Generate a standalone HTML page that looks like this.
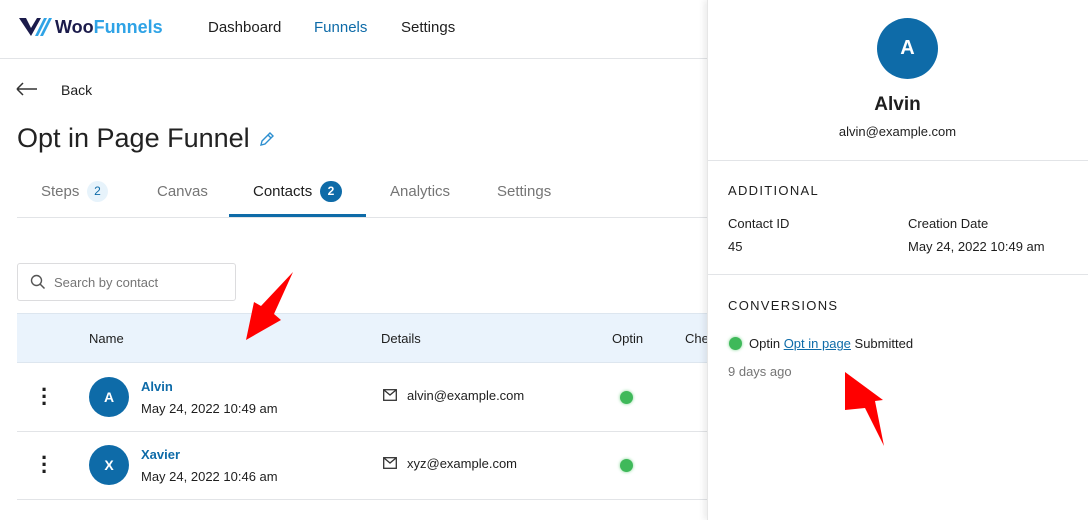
<!DOCTYPE html>
<html><head><style>
*{margin:0;padding:0;box-sizing:border-box}
body{width:1088px;height:520px;overflow:hidden;background:#fff;font-family:"Liberation Sans",sans-serif;color:#1e1e1e;position:relative}
.a{position:absolute;white-space:nowrap}
.av{position:absolute;border-radius:50%;background:#0e6ba8;color:#fff;font-weight:bold;text-align:center}
.dot{position:absolute;width:13px;height:13px;border-radius:50%;background:#3fb95a;box-shadow:0 0 3px #7dd38f}
</style></head><body>
<div class="a" style="left:0;top:58px;width:707px;height:1px;background:#e2e4e7"></div>
<svg class="a" style="left:18px;top:16px" width="34" height="22" viewBox="0 0 34 22"><path d="M1 2h7l5 10 6-10h4L13 20z" fill="#1b1b4b"/><path d="M22 20L31 2h3l-9 18z" fill="#2fa3e6"/><path d="M17 20L26 2h3l-9 18z" fill="#2fa3e6"/></svg>
<div class="a" style="left:55px;top:17px;font-size:18px;font-weight:bold"><span style="color:#1b1b4b">Woo</span><span style="color:#2fa3e6">Funnels</span></div>
<div class="a" style="left:208px;top:19px;font-size:15px">Dashboard</div>
<div class="a" style="left:314px;top:19px;font-size:15px;color:#0e6ba8">Funnels</div>
<div class="a" style="left:401px;top:19px;font-size:15px">Settings</div>
<svg class="a" style="left:16px;top:82px" width="22" height="14"><path d="M1 7h20M1 7l6-6M1 7l6 6" stroke="#333" stroke-width="1.5" fill="none"/></svg>
<div class="a" style="left:61px;top:82px;font-size:14px">Back</div>
<div class="a" style="left:17px;top:123px;font-size:27px;color:#222">Opt in Page Funnel</div>
<svg class="a" style="left:259px;top:131px" width="16" height="16"><path d="M2 14l1-4 8-8 3 3-8 8z M9 4l3 3" stroke="#2d8fd0" stroke-width="1.4" fill="none"/></svg>
<div class="a" style="left:41px;top:183px;font-size:15px;color:#757575">Steps</div>
<div class="a" style="left:87px;top:181px;width:21px;height:21px;border-radius:50%;background:#e7f3fb;color:#0e6ba8;font-size:12px;text-align:center;line-height:21px">2</div>
<div class="a" style="left:157px;top:183px;font-size:15px;color:#757575">Canvas</div>
<div class="a" style="left:253px;top:183px;font-size:15px">Contacts</div>
<div class="a" style="left:320px;top:181px;width:22px;height:21px;border-radius:11px;background:#0e6ba8;color:#fff;font-size:12px;font-weight:bold;text-align:center;line-height:21px">2</div>
<div class="a" style="left:390px;top:183px;font-size:15px;color:#757575">Analytics</div>
<div class="a" style="left:497px;top:183px;font-size:15px;color:#757575">Settings</div>
<div class="a" style="left:17px;top:217px;width:690px;height:1px;background:#e2e4e7"></div>
<div class="a" style="left:229px;top:214px;width:137px;height:3px;background:#0e6ba8"></div>
<div class="a" style="left:17px;top:263px;width:219px;height:38px;border:1px solid #dcdcde;border-radius:3px"></div>
<svg class="a" style="left:30px;top:274px" width="16" height="16"><circle cx="6.5" cy="6.5" r="5" stroke="#555" stroke-width="1.4" fill="none"/><path d="M10 10l4.5 4.5" stroke="#555" stroke-width="1.5"/></svg>
<div class="a" style="left:54px;top:275px;font-size:13px;color:#757575">Search by contact</div>
<div class="a" style="left:17px;top:313px;width:690px;height:50px;background:#eaf3fc;border-top:1px solid #dde6ef;border-bottom:1px solid #dde6ef"></div>
<div class="a" style="left:89px;top:331px;font-size:13px">Name</div>
<div class="a" style="left:381px;top:331px;font-size:13px">Details</div>
<div class="a" style="left:612px;top:331px;font-size:13px">Optin</div>
<div class="a" style="left:685px;top:331px;font-size:13px">Che</div>
<div class="a" style="left:17px;top:431px;width:690px;height:1px;background:#e2e4e7"></div>
<div class="a" style="left:17px;top:499px;width:690px;height:1px;background:#e2e4e7"></div>
<div class="a" style="left:41px;top:386px;font-size:22px;line-height:7px;font-weight:bold">·<br>·<br>·</div>
<div class="a" style="left:41px;top:454px;font-size:22px;line-height:7px;font-weight:bold">·<br>·<br>·</div>
<div class="av" style="left:89px;top:377px;width:40px;height:40px;line-height:40px;font-size:14px">A</div>
<div class="av" style="left:89px;top:445px;width:40px;height:40px;line-height:40px;font-size:14px">X</div>
<div class="a" style="left:141px;top:379px;font-size:13px;font-weight:bold;color:#0e6ba8">Alvin</div>
<div class="a" style="left:141px;top:401px;font-size:13px">May 24, 2022 10:49 am</div>
<div class="a" style="left:141px;top:447px;font-size:13px;font-weight:bold;color:#0e6ba8">Xavier</div>
<div class="a" style="left:141px;top:469px;font-size:13px">May 24, 2022 10:46 am</div>
<svg class="a" style="left:383px;top:389px" width="14" height="12"><rect x="0.7" y="0.7" width="12.6" height="10.6" stroke="#333" stroke-width="1.3" fill="none"/><path d="M1 1l6 5 6-5" stroke="#333" stroke-width="1.3" fill="none"/></svg>
<svg class="a" style="left:383px;top:457px" width="14" height="12"><rect x="0.7" y="0.7" width="12.6" height="10.6" stroke="#333" stroke-width="1.3" fill="none"/><path d="M1 1l6 5 6-5" stroke="#333" stroke-width="1.3" fill="none"/></svg>
<div class="a" style="left:407px;top:388px;font-size:13px">alvin@example.com</div>
<div class="a" style="left:407px;top:456px;font-size:13px">xyz@example.com</div>
<div class="dot" style="left:620px;top:391px"></div>
<div class="dot" style="left:620px;top:459px"></div>
<svg class="a" style="left:240px;top:268px" width="60" height="78"><path d="M53 4L34 46 41 52 6 72 14 34 21 38z" fill="#f00"/></svg>
<!-- panel -->
<div class="a" style="left:707px;top:0;width:381px;height:520px;background:#fff;box-shadow:-3px 0 6px rgba(0,0,0,.08);border-left:1px solid #e6e6e6"></div>
<div class="av" style="left:877px;top:18px;width:61px;height:61px;line-height:61px;font-size:20px">A</div>
<div class="a" style="left:707px;width:381px;text-align:center;top:94px;font-size:19px;font-weight:bold">Alvin</div>
<div class="a" style="left:707px;width:381px;text-align:center;top:124px;font-size:13px">alvin@example.com</div>
<div class="a" style="left:708px;top:160px;width:380px;height:1px;background:#e2e4e7"></div>
<div class="a" style="left:728px;top:183px;font-size:13px;letter-spacing:1.3px">ADDITIONAL</div>
<div class="a" style="left:728px;top:216px;font-size:13px">Contact ID</div>
<div class="a" style="left:728px;top:239px;font-size:13px">45</div>
<div class="a" style="left:908px;top:216px;font-size:13px">Creation Date</div>
<div class="a" style="left:908px;top:239px;font-size:13px">May 24, 2022 10:49 am</div>
<div class="a" style="left:708px;top:274px;width:380px;height:1px;background:#e2e4e7"></div>
<div class="a" style="left:728px;top:298px;font-size:13px;letter-spacing:1.3px">CONVERSIONS</div>
<div class="dot" style="left:729px;top:337px"></div>
<div class="a" style="left:749px;top:336px;font-size:13px">Optin <span style="color:#0e6ba8;text-decoration:underline">Opt in page</span> Submitted</div>
<div class="a" style="left:728px;top:364px;font-size:13px;color:#757575">9 days ago</div>
<svg class="a" style="left:840px;top:366px" width="50" height="84"><path d="M5 6L43 34 35 35 44 80 25 42 5 44z" fill="#f00"/></svg>
</body></html>
